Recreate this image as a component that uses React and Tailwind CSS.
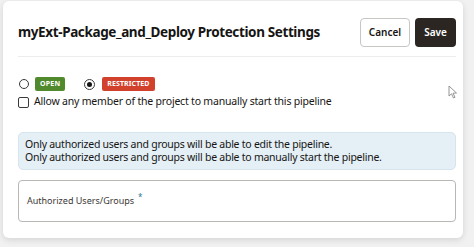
import React from "react";

export default function App() {
  const font = { fontFamily: '"Noto Sans", "Open Sans", sans-serif' };
  return (
    <div className="w-[474px] h-[247px] bg-[#f1f1f1] pl-[3px] pt-px overflow-hidden" style={font}>
      <div className="w-[460px] h-[237px] bg-white rounded-[6px] shadow-[0_2px_6px_rgba(0,0,0,0.12)] pl-[15px] pr-[7px] relative">
        <div className="flex items-center justify-between h-[56px] pt-[7px] border-b border-[#ececec]">
          <div className="text-[13.5px] font-bold text-[#161513] tracking-[-0.38px] whitespace-nowrap">myExt-Package_and_Deploy Protection Settings</div>
          <div className="flex gap-[5px]">
            <button className="h-[29px] w-[50px] rounded-[4px] border border-[#c8c6c3] bg-white text-[10px] font-semibold text-[#161513]">Cancel</button>
            <button className="h-[29px] w-[41px] rounded-[4px] bg-[#2b2622] text-[10px] font-semibold text-white">Save</button>
          </div>
        </div>
        <div className="flex items-center h-[20px] mt-[17px]">
          <span className="w-[10px] h-[10px] rounded-full border border-[#3a3a3a] ml-px"></span>
          <span className="ml-[6px] h-[14px] px-[5px] rounded-[2px] bg-[#508a2c] text-white text-[7px] font-bold flex items-center tracking-[0.2px]">OPEN</span>
          <span className="ml-[19px] w-[11px] h-[11px] rounded-full border border-[#3a3a3a] flex items-center justify-center">
            <span className="w-[5px] h-[5px] rounded-full bg-[#161513]"></span>
          </span>
          <span className="ml-[7px] h-[14px] px-[5px] rounded-[2px] bg-[#d2412c] text-white text-[7px] font-bold flex items-center tracking-[0.1px]">RESTRICTED</span>
        </div>
        <div className="flex items-center mt-px h-[14px]">
          <span className="w-[11px] h-[11px] rounded-[2px] border border-[#3a3a3a]"></span>
          <span className="ml-[5px] text-[10.5px] tracking-[-0.2px] text-[#161513] whitespace-nowrap">Allow any member of the project to manually start this pipeline</span>
        </div>
        <div className="mt-[23px] h-[38px] rounded-[5px] bg-[#e4eff6] border border-[#d6e4ed] px-[6px] flex flex-col justify-center text-[10.5px] tracking-[-0.25px] leading-[13px] text-[#161513]">
          <div className="whitespace-nowrap">Only authorized users and groups will be able to edit the pipeline.</div>
          <div className="whitespace-nowrap">Only authorized users and groups will be able to manually start the pipeline.</div>
        </div>
        <div className="mt-[10px] h-[42px] rounded-[4px] border border-[#b9b7b4] bg-white flex items-center pl-[8px]">
          <span className="text-[9px] text-[#3b3836] whitespace-nowrap">Authorized Users/Groups</span>
          <span className="ml-[4px] text-[8px] text-[#2d7a95] -mt-[8px]">*</span>
        </div>
        <svg className="absolute left-[445px] top-[84px]" width="10" height="14" viewBox="0 0 10 14">
          <path d="M1 1 L1 11 L3.5 8.8 L5.5 13 L7 12.3 L5 8.2 L8.5 8 Z" fill="white" stroke="#8a8a8a" strokeWidth="0.9" strokeLinejoin="round" />
        </svg>
      </div>
    </div>
  );
}
